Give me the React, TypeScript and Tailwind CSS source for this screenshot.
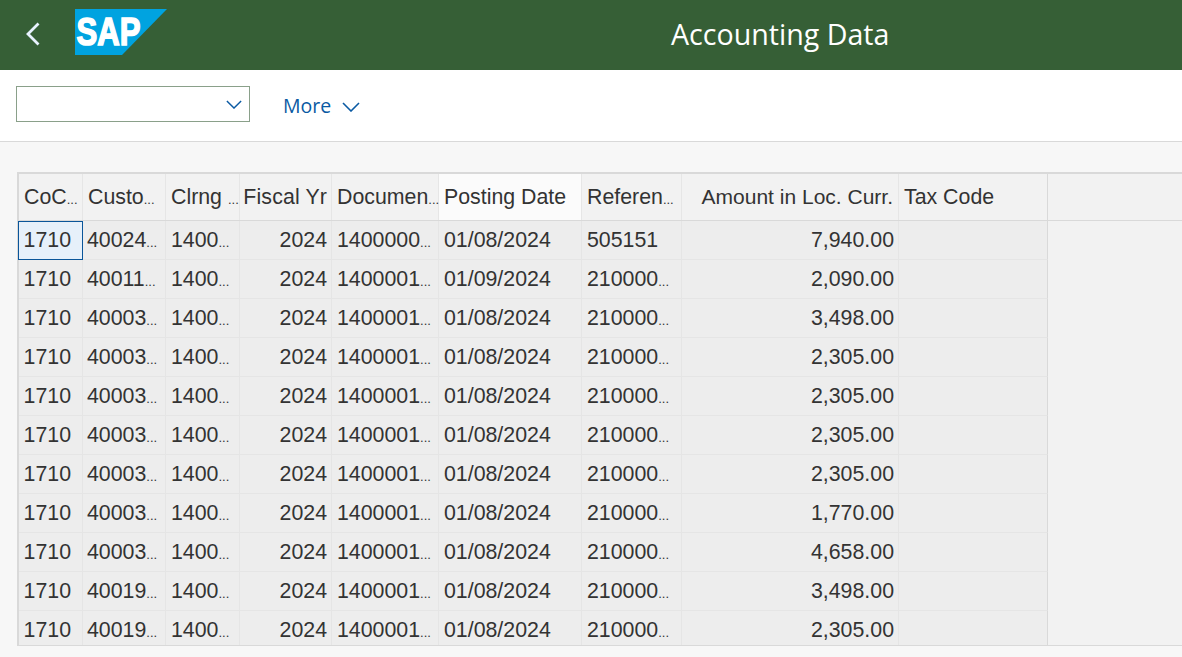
import React from "react";

const columns = [
  { w: "w-[64px]", pl: "pl-[4.6px]", pr: "pr-[4px]", hpl: "pl-[5px]", hpr: "pr-[2px]", extra: "", title: "CoC", dots: true, right: false },
  { w: "w-[83px]", pl: "pl-[4px]", pr: "pr-[2px]", hpl: "pl-[5px]", hpr: "pr-[2px]", extra: "", title: "Custo", dots: true, right: false },
  { w: "w-[74px]", pl: "pl-[5px]", pr: "pr-[2px]", hpl: "pl-[5px]", hpr: "pr-[2px]", extra: "", title: "Clrng ", dots: true, right: false },
  { w: "w-[92px]", pl: "pl-[4px]", pr: "pr-[4px]", hpl: "pl-[3px]", hpr: "pr-[4px]", extra: "tracking-[0.12px]", title: "Fiscal Yr", dots: false, right: true },
  { w: "w-[107px]", pl: "pl-[5px]", pr: "pr-[2px]", hpl: "pl-[5px]", hpr: "pr-[2px]", extra: "", title: "Documen", dots: true, right: false },
  { w: "w-[143px]", pl: "pl-[5px]", pr: "pr-[4px]", hpl: "pl-[5px]", hpr: "pr-[4px]", extra: "", title: "Posting Date", dots: false, right: false },
  { w: "w-[100px]", pl: "pl-[5px]", pr: "pr-[2px]", hpl: "pl-[5px]", hpr: "pr-[2px]", extra: "", title: "Referen", dots: true, right: false },
  { w: "w-[217px]", pl: "pl-[4px]", pr: "pr-[4px]", hpl: "pl-[4px]", hpr: "pr-[5px]", extra: "text-[21px]", title: "Amount in Loc. Curr.", dots: false, right: true },
  { w: "w-[149px]", pl: "pl-[5px]", pr: "pr-[4px]", hpl: "pl-[5px]", hpr: "pr-[4px]", extra: "", title: "Tax Code", dots: false, right: false },
];

type Val = { t: string; d?: boolean };
const c = (t: string): Val => ({ t, d: true });
const p = (t: string): Val => ({ t });

const data: [string, string, string, string, string][] = [
  ["40024", "1400000", "01/08/2024", "505151", "7,940.00"],
  ["40011", "1400001", "01/09/2024", "210000", "2,090.00"],
  ["40003", "1400001", "01/08/2024", "210000", "3,498.00"],
  ["40003", "1400001", "01/08/2024", "210000", "2,305.00"],
  ["40003", "1400001", "01/08/2024", "210000", "2,305.00"],
  ["40003", "1400001", "01/08/2024", "210000", "2,305.00"],
  ["40003", "1400001", "01/08/2024", "210000", "2,305.00"],
  ["40003", "1400001", "01/08/2024", "210000", "1,770.00"],
  ["40003", "1400001", "01/08/2024", "210000", "4,658.00"],
  ["40019", "1400001", "01/08/2024", "210000", "3,498.00"],
  ["40019", "1400001", "01/08/2024", "210000", "2,305.00"],
];

const rows: Val[][] = data.map(([cust, doc, date, ref, amt], i) => [
  p("1710"),
  c(cust),
  c("1400"),
  p("2024"),
  c(doc),
  p(date),
  i === 0 ? p(ref) : c(ref),
  p(amt),
  p(""),
]);

function Dots() {
  return <span className="text-[13px] leading-none">...</span>;
}

function Chevron({ className }: { className: string }) {
  return (
    <svg viewBox="0 0 18 10" className={className} fill="none" stroke="currentColor" strokeWidth="1.6">
      <path d="M1 1l8 8 8-8" />
    </svg>
  );
}

export default function App() {
  return (
    <div className="h-[657px] w-[1182px] overflow-hidden flex flex-col bg-[#f7f7f7] font-['Liberation_Sans',sans-serif] text-[#333333]">
      <header className="h-[70px] shrink-0 bg-[#365f36] flex items-start">
        <svg viewBox="0 0 14 24" className="ml-[26px] mt-[22px] w-[14px] h-[24px] text-[#e8f2ff]" fill="none" stroke="currentColor" strokeWidth="2.8">
          <path d="M12.5 1.5L2 12l10.5 10.5" />
        </svg>
        <svg viewBox="0 0 92 46" className="ml-[35px] mt-[9px] w-[92px] h-[46px] shrink-0">
          <polygon points="0,0 92,0 47,46 0,46" fill="#00a3e0" />
          <text x="1.5" y="36" fill="#ffffff" fontFamily="Liberation Sans" fontWeight="700" fontSize="39" textLength="64" lengthAdjust="spacingAndGlyphs" stroke="#ffffff" strokeWidth="1.6">SAP</text>
        </svg>
        <div className="ml-[504px] mt-[14px] text-[#ffffff] text-[28.6px] leading-[40px] font-['Open_Sans',sans-serif] whitespace-nowrap">Accounting Data</div>
      </header>

      <div className="h-[72px] shrink-0 bg-white border-b border-[#d9d9d9] flex items-start pl-[16px] pt-[16px]">
        <div className="w-[234px] h-[36px] border border-[#8aa08a] flex items-center justify-end pr-[7px]">
          <Chevron className="w-[16px] h-[9px] text-[#0a5aa3]" />
        </div>
        <div className="ml-[33px] mt-[6px] text-[19.5px] leading-[28px] text-[#0a5aa3] font-['Open_Sans',sans-serif]">More</div>
        <Chevron className="ml-[11px] mt-[16px] w-[18px] h-[10px] text-[#0a5aa3]" />
      </div>

      <div className="flex-1 min-h-0 pt-[30px] pl-[17px]">
        <div className="h-[474px] border-t-2 border-l-2 border-b border-[#d9d9d9] bg-[#f2f2f2] text-[21.33px]">
          <div className="flex h-[47px] border-b border-[#d9d9d9]">
            {columns.map((col, i) => (
              <div
                key={col.title}
                className={`${col.w} shrink-0 flex items-center ${col.hpl} ${col.hpr} whitespace-nowrap border-r ${i === 8 ? "border-[#d9d9d9]" : "border-[#e6e6e6]"} ${i === 5 ? "bg-[#fbfbfb]" : ""} ${col.right ? "justify-end" : ""}`}
              >
                <span className={`leading-[26px] whitespace-pre ${col.extra}`}>
                  {col.title}
                  {col.dots ? <Dots /> : null}
                </span>
              </div>
            ))}
          </div>
          {rows.map((r, ri) => (
            <div key={ri} className={`flex ${ri === 10 ? "h-[34px] overflow-hidden" : "h-[39px]"}`}>
              {r.map((v, ci) => {
                const focused = ri === 0 && ci === 0;
                return (
                  <div
                    key={ci}
                    className={`${columns[ci].w} h-[39px] shrink-0 relative flex items-center ${columns[ci].pl} ${columns[ci].pr} whitespace-nowrap border-b border-b-[#e5e5e5] border-r ${ci === 8 ? "border-r-[#d9d9d9]" : "border-r-[#e5e5e5]"} ${columns[ci].right ? "justify-end" : ""} ${focused ? "bg-[#e6f0fa]" : "bg-[#ededed]"}`}
                  >
                    <span className="leading-[26px]">
                      {v.t}
                      {v.d ? <Dots /> : null}
                    </span>
                    {focused ? (
                      <div className="absolute -left-[1px] top-0 w-[65px] h-[39px] border border-[#0a5599]" />
                    ) : null}
                  </div>
                );
              })}
            </div>
          ))}
        </div>
      </div>
    </div>
  );
}
